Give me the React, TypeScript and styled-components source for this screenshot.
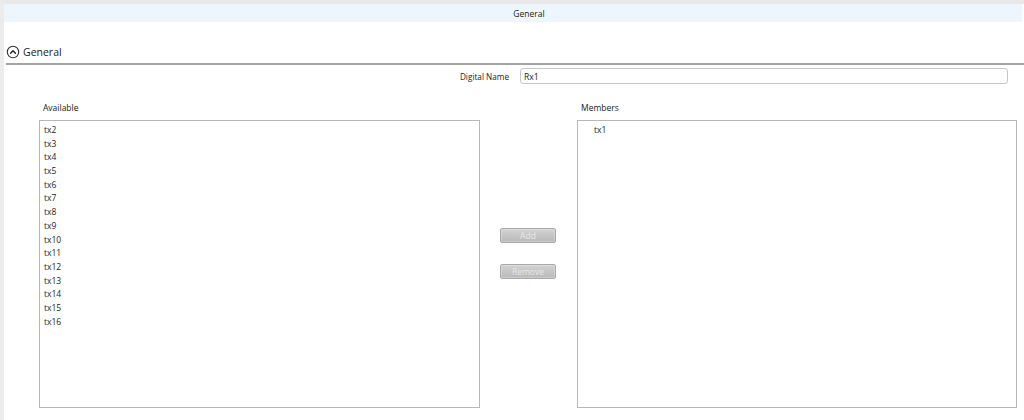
import React from "react";
import styled, { createGlobalStyle } from "styled-components";

const Global = createGlobalStyle`
  html, body { margin: 0; padding: 0; background: #ffffff; }
  body { font-family: "Open Sans", "Noto Sans", "Liberation Sans", sans-serif; color: #1e1e1e; }
  * { box-sizing: border-box; }
`;

const Page = styled.div`
  width: 1024px;
  height: 420px;
  overflow: hidden;
  border-top: 4px solid #e9e9e9;
  border-left: 4px solid #ececec;
  display: flex;
  flex-direction: column;
`;

const TitleBar = styled.div`
  height: 18px;
  background: #eef6fd;
  margin-right: 2px;
  display: flex;
  align-items: center;
  justify-content: center;
  font-size: 8.5px;
  color: #222;
  padding-left: 32px;
`;

const SectionHeader = styled.div`
  margin-top: 21px;
  height: 20px;
  display: flex;
  align-items: center;
  gap: 3px;
  padding-left: 2px;
  padding-bottom: 2px;
  font-size: 10.5px;
  color: #1a1a1a;
`;

const Separator = styled.div`
  height: 2px;
  margin-left: 2px;
  background: #a3a3a3;
`;

const FieldRow = styled.div`
  margin-top: 3px;
  display: grid;
  grid-template-columns: 505px 488px;
  column-gap: 11px;
  align-items: center;
`;

const FieldLabel = styled.div`
  text-align: right;
  font-size: 8.2px;
  color: #222;
`;

const TextInput = styled.input`
  height: 16px;
  border: 1px solid #c8c8c8;
  border-radius: 3px;
  padding: 0 0 0 3px;
  font-family: inherit;
  font-size: 8.5px;
  color: #222;
  outline: none;
  background: #fff;
`;

const ListsRow = styled.div`
  margin-top: 16px;
  padding-left: 35px;
  display: flex;
`;

const ListColumn = styled.div<{ $w: number }>`
  width: ${(p) => p.$w}px;
  display: flex;
  flex-direction: column;
`;

const ListLabel = styled.div`
  height: 20px;
  padding: 2px 0 0 4px;
  font-size: 8.5px;
  line-height: 12px;
  color: #222;
`;

const ListBox = styled.div<{ $indent: number }>`
  height: 288px;
  border: 1px solid #b7b7b7;
  padding: 2px 0 0 ${(p) => p.$indent}px;
  background: #fff;
`;

const ListItem = styled.div`
  height: 13.7px;
  line-height: 13.7px;
  font-size: 8.5px;
  color: #1e1e1e;
`;

const ButtonColumn = styled.div`
  width: 97px;
  display: flex;
  flex-direction: column;
  align-items: center;
  padding-top: 128px;
  padding-right: 1px;
  gap: 21px;
`;

const GrayButton = styled.button`
  width: 56px;
  height: 15px;
  padding: 0;
  border: 1px solid #a9a9a9;
  border-radius: 2px;
  background: linear-gradient(#d2d2d2, #b9b9b9);
  color: #e8e8e8;
  font-family: inherit;
  font-size: 8.5px;
  box-shadow: inset 0 0 0 1px rgba(255, 255, 255, 0.25);
`;

const ChevronIcon = () => (
  <svg width="14" height="14" viewBox="0 0 14 14">
    <circle cx="7" cy="7" r="5.7" fill="none" stroke="#333" strokeWidth="1.1" />
    <path d="M4.6 8.2 L7 5.8 L9.4 8.2" fill="none" stroke="#222" strokeWidth="1.4" strokeLinecap="round" strokeLinejoin="round" />
  </svg>
);

const available = ["tx2", "tx3", "tx4", "tx5", "tx6", "tx7", "tx8", "tx9", "tx10", "tx11", "tx12", "tx13", "tx14", "tx15", "tx16"];
const members = ["tx1"];

export default function App() {
  return (
    <>
      <Global />
      <Page>
        <TitleBar>General</TitleBar>
        <SectionHeader>
          <ChevronIcon />
          <span>General</span>
        </SectionHeader>
        <Separator />
        <FieldRow>
          <FieldLabel>Digital Name</FieldLabel>
          <TextInput defaultValue="Rx1" />
        </FieldRow>
        <ListsRow>
          <ListColumn $w={441}>
            <ListLabel>Available</ListLabel>
            <ListBox $indent={4}>
              {available.map((t) => (
                <ListItem key={t}>{t}</ListItem>
              ))}
            </ListBox>
          </ListColumn>
          <ButtonColumn>
            <GrayButton disabled>Add</GrayButton>
            <GrayButton disabled>Remove</GrayButton>
          </ButtonColumn>
          <ListColumn $w={440}>
            <ListLabel>Members</ListLabel>
            <ListBox $indent={16}>
              {members.map((t) => (
                <ListItem key={t}>{t}</ListItem>
              ))}
            </ListBox>
          </ListColumn>
        </ListsRow>
      </Page>
    </>
  );
}
